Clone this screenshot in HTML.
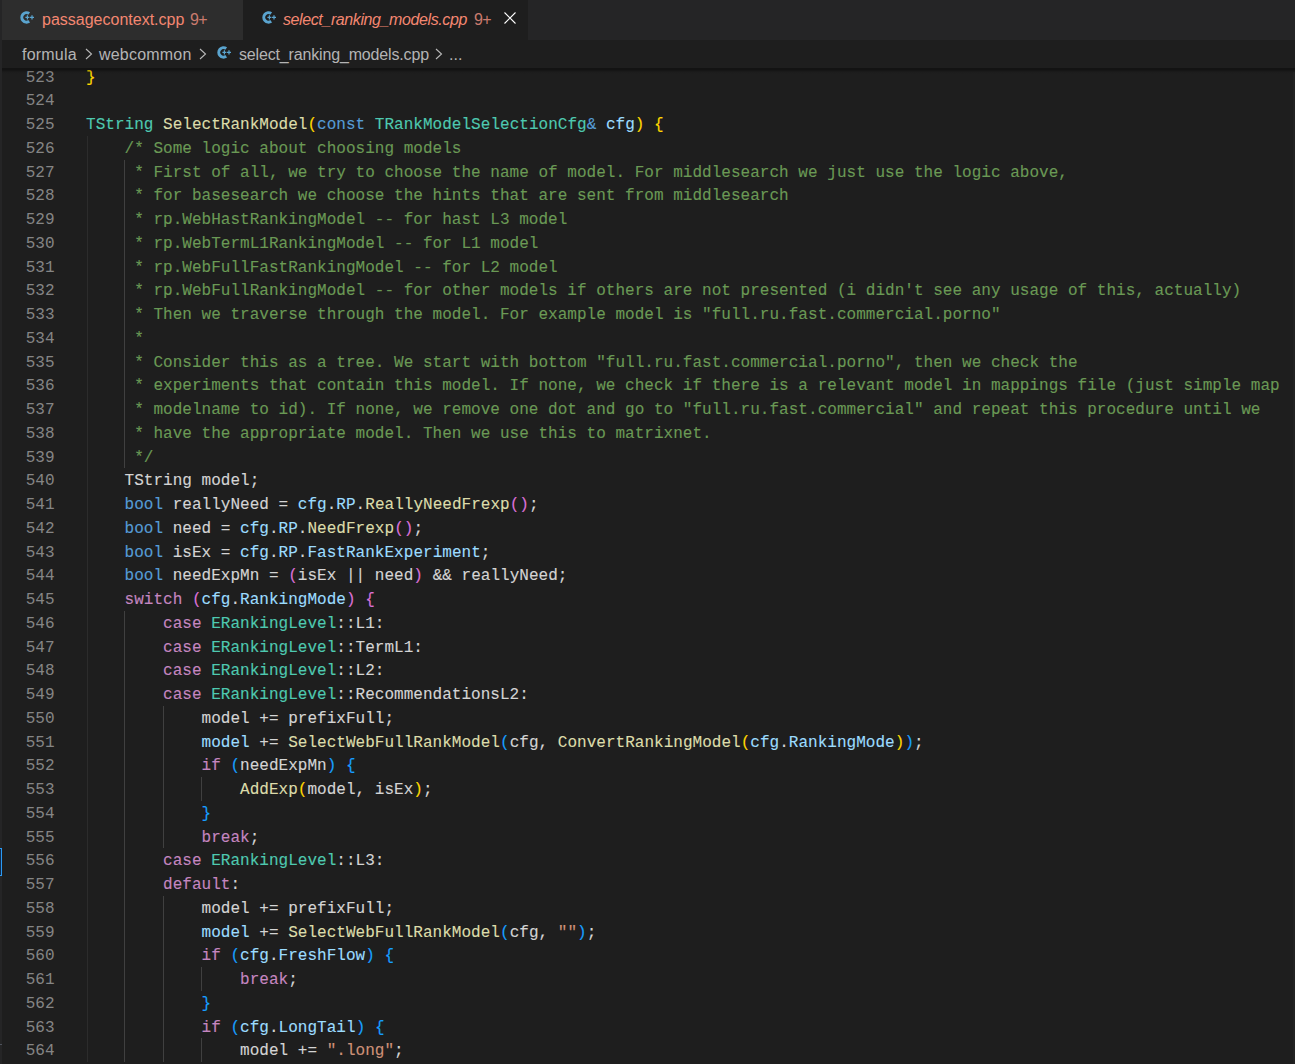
<!DOCTYPE html>
<html><head><meta charset="utf-8"><style>
html,body{margin:0;padding:0;}
body{width:1295px;height:1064px;background:#1e1e1e;position:relative;overflow:hidden;font-family:"Liberation Sans",sans-serif;}
#lstrip{position:absolute;left:0;top:0;width:2px;height:1064px;background:#252526;}
#tabbar{position:absolute;left:2px;top:0;width:1293px;height:40px;background:#252526;}
.tab{position:absolute;top:0;height:40px;}
#tab1{left:0;width:241px;background:#2d2d2d;}
#tab2{left:241px;width:285px;background:#1e1e1e;}
.tt{position:absolute;top:11px;font-size:16px;line-height:18px;color:#f48771;white-space:nowrap;}
.badge{position:absolute;top:11px;font-size:16px;letter-spacing:-0.6px;line-height:18px;color:#c97b6e;white-space:nowrap;}
.ic{position:absolute;}
#bc{position:absolute;left:2px;top:40px;width:1293px;height:28px;background:#1e1e1e;}
.bt{position:absolute;top:5.7px;font-size:16px;line-height:18px;color:#b4b4b4;white-space:nowrap;}
#shadow{position:absolute;left:2px;top:68px;width:1293px;height:6px;background:linear-gradient(rgba(0,0,0,0.37) 0px,rgba(0,0,0,0.37) 2px,rgba(0,0,0,0.16) 3px,rgba(0,0,0,0.05) 4.5px,rgba(0,0,0,0) 6px);z-index:5;}
#ed{position:absolute;left:2px;top:68px;width:1293px;height:996px;overflow:hidden;}
#edin{position:absolute;left:-2px;top:-68px;width:1295px;height:1064px;}
.ln{position:absolute;left:0;width:54.5px;text-align:right;font-family:"Liberation Mono",monospace;font-size:16px;line-height:23.75px;height:23.75px;color:#858585;white-space:pre;}
.cl{position:absolute;left:86px;font-family:"Liberation Mono",monospace;font-size:16px;line-height:23.75px;height:23.75px;color:#d4d4d4;white-space:pre;letter-spacing:0.025px;-webkit-text-stroke:0.12px;}
.g{position:absolute;width:1px;background:#404040;}
.g0{position:absolute;width:1px;background:#2c2c2c;}
.c{color:#6a9955} .k{color:#569cd6} .p{color:#c586c0} .t{color:#4ec9b0} .f{color:#dcdcaa} .v{color:#9cdcfe} .s{color:#ce9178}
.b1{color:#ffd700} .b2{color:#da70d6} .b3{color:#179fff}
#focus{position:absolute;left:-10px;top:848px;width:10px;height:26px;border:1px solid #2b9af3;background:#0f2a4d;}
</style></head><body>
<div id="lstrip"></div>
<div id="tabbar">
 <div class="tab" id="tab1">
  <svg class="ic" style="left:17px;top:10px" width="16" height="16" viewBox="0 0 16 16"><path d="M10.2 3.6 A4.7 4.7 0 1 0 10.2 11.3" fill="none" stroke="#5aa4cf" stroke-width="3"/><path d="M6.4 7.45h4M8.4 5.3v4.3M11 7.45h4M13 5.3v4.3" stroke="#5aa4cf" stroke-width="1.25"/></svg>
  <div class="tt" id="t1" style="left:40px">passagecontext.cpp</div>
  <div class="badge" id="b1" style="left:188px">9+</div>
 </div>
 <div class="tab" id="tab2">
  <svg class="ic" style="left:18px;top:10px" width="16" height="16" viewBox="0 0 16 16"><path d="M10.2 3.6 A4.7 4.7 0 1 0 10.2 11.3" fill="none" stroke="#5aa4cf" stroke-width="3"/><path d="M6.4 7.45h4M8.4 5.3v4.3M11 7.45h4M13 5.3v4.3" stroke="#5aa4cf" stroke-width="1.25"/></svg>
  <div class="tt" id="t2" style="left:40px;font-style:italic;letter-spacing:-0.4px">select_ranking_models.cpp</div>
  <div class="badge" id="b2" style="left:231px">9+</div>
  <svg class="ic" style="left:261px;top:12px" width="12" height="12" viewBox="0 0 12 12"><path d="M0.5 0.5L11.5 11.5M11.5 0.5L0.5 11.5" stroke="#ffffff" stroke-width="1.1"/></svg>
 </div>
</div>
<div id="bc">
 <div class="bt" id="bc1" style="left:20px;letter-spacing:0.2px">formula</div>
 <svg class="ic" style="left:83px;top:8px" width="8" height="12" viewBox="0 0 8 12"><path d="M1 1L6.5 6L1 11" fill="none" stroke="#bababa" stroke-width="1.1"/></svg>
 <div class="bt" id="bc2" style="left:97px;letter-spacing:0.2px">webcommon</div>
 <svg class="ic" style="left:197px;top:8px" width="8" height="12" viewBox="0 0 8 12"><path d="M1 1L6.5 6L1 11" fill="none" stroke="#bababa" stroke-width="1.1"/></svg>
 <svg class="ic" style="left:214px;top:5px" width="16" height="16" viewBox="0 0 16 16"><path d="M10.2 3.6 A4.7 4.7 0 1 0 10.2 11.3" fill="none" stroke="#5aa4cf" stroke-width="3"/><path d="M6.4 7.45h4M8.4 5.3v4.3M11 7.45h4M13 5.3v4.3" stroke="#5aa4cf" stroke-width="1.25"/></svg>
 <div class="bt" id="bc3" style="left:237px;letter-spacing:-0.16px">select_ranking_models.cpp</div>
 <svg class="ic" style="left:433px;top:8px" width="8" height="12" viewBox="0 0 8 12"><path d="M1 1L6.5 6L1 11" fill="none" stroke="#bababa" stroke-width="1.1"/></svg>
 <div class="bt" id="bc4" style="left:447px">...</div>
</div>
<div id="shadow"></div>
<div id="ed"><div id="edin">
<div class="g0" style="left:87px;top:135.75px;height:926.25px"></div><div class="g" style="left:124px;top:159.50px;height:308.75px"></div><div class="g" style="left:124px;top:610.75px;height:451.25px"></div><div class="g" style="left:163px;top:705.75px;height:142.50px"></div><div class="g" style="left:163px;top:895.75px;height:166.25px"></div><div class="g" style="left:201px;top:777.00px;height:23.75px"></div><div class="g" style="left:201px;top:967.00px;height:23.75px"></div><div class="g" style="left:201px;top:1038.25px;height:23.75px"></div>
<div class="ln" style="top:67px">523</div><div class="ln" style="top:90px">524</div><div class="ln" style="top:114px">525</div><div class="ln" style="top:138px">526</div><div class="ln" style="top:162px">527</div><div class="ln" style="top:185px">528</div><div class="ln" style="top:209px">529</div><div class="ln" style="top:233px">530</div><div class="ln" style="top:257px">531</div><div class="ln" style="top:280px">532</div><div class="ln" style="top:304px">533</div><div class="ln" style="top:328px">534</div><div class="ln" style="top:352px">535</div><div class="ln" style="top:375px">536</div><div class="ln" style="top:399px">537</div><div class="ln" style="top:423px">538</div><div class="ln" style="top:447px">539</div><div class="ln" style="top:470px">540</div><div class="ln" style="top:494px">541</div><div class="ln" style="top:518px">542</div><div class="ln" style="top:542px">543</div><div class="ln" style="top:565px">544</div><div class="ln" style="top:589px">545</div><div class="ln" style="top:613px">546</div><div class="ln" style="top:637px">547</div><div class="ln" style="top:660px">548</div><div class="ln" style="top:684px">549</div><div class="ln" style="top:708px">550</div><div class="ln" style="top:732px">551</div><div class="ln" style="top:755px">552</div><div class="ln" style="top:779px">553</div><div class="ln" style="top:803px">554</div><div class="ln" style="top:827px">555</div><div class="ln" style="top:850px">556</div><div class="ln" style="top:874px">557</div><div class="ln" style="top:898px">558</div><div class="ln" style="top:922px">559</div><div class="ln" style="top:945px">560</div><div class="ln" style="top:969px">561</div><div class="ln" style="top:993px">562</div><div class="ln" style="top:1017px">563</div><div class="ln" style="top:1040px">564</div>
<div class="cl" style="top:67px"><span class="b1">}</span></div><div class="cl" style="top:90px"></div><div class="cl" style="top:114px"><span class="t">TString</span> <span class="f">SelectRankModel</span><span class="b1">(</span><span class="k">const</span> <span class="t">TRankModelSelectionCfg</span><span class="k">&amp;</span> <span class="v">cfg</span><span class="b1">)</span> <span class="b1">{</span></div><div class="cl" style="top:138px">    <span class="c">/* Some logic about choosing models</span></div><div class="cl" style="top:162px">    <span class="c"> * First of all, we try to choose the name of model. For middlesearch we just use the logic above,</span></div><div class="cl" style="top:185px">    <span class="c"> * for basesearch we choose the hints that are sent from middlesearch</span></div><div class="cl" style="top:209px">    <span class="c"> * rp.WebHastRankingModel -- for hast L3 model</span></div><div class="cl" style="top:233px">    <span class="c"> * rp.WebTermL1RankingModel -- for L1 model</span></div><div class="cl" style="top:257px">    <span class="c"> * rp.WebFullFastRankingModel -- for L2 model</span></div><div class="cl" style="top:280px">    <span class="c"> * rp.WebFullRankingModel -- for other models if others are not presented (i didn&#x27;t see any usage of this, actually)</span></div><div class="cl" style="top:304px">    <span class="c"> * Then we traverse through the model. For example model is &quot;full.ru.fast.commercial.porno&quot;</span></div><div class="cl" style="top:328px">    <span class="c"> *</span></div><div class="cl" style="top:352px">    <span class="c"> * Consider this as a tree. We start with bottom &quot;full.ru.fast.commercial.porno&quot;, then we check the</span></div><div class="cl" style="top:375px">    <span class="c"> * experiments that contain this model. If none, we check if there is a relevant model in mappings file (just simple map</span></div><div class="cl" style="top:399px">    <span class="c"> * modelname to id). If none, we remove one dot and go to &quot;full.ru.fast.commercial&quot; and repeat this procedure until we</span></div><div class="cl" style="top:423px">    <span class="c"> * have the appropriate model. Then we use this to matrixnet.</span></div><div class="cl" style="top:447px">    <span class="c"> */</span></div><div class="cl" style="top:470px">    TString model;</div><div class="cl" style="top:494px">    <span class="k">bool</span> reallyNeed = <span class="v">cfg</span>.<span class="v">RP</span>.<span class="f">ReallyNeedFrexp</span><span class="b2">()</span>;</div><div class="cl" style="top:518px">    <span class="k">bool</span> need = <span class="v">cfg</span>.<span class="v">RP</span>.<span class="f">NeedFrexp</span><span class="b2">()</span>;</div><div class="cl" style="top:542px">    <span class="k">bool</span> isEx = <span class="v">cfg</span>.<span class="v">RP</span>.<span class="v">FastRankExperiment</span>;</div><div class="cl" style="top:565px">    <span class="k">bool</span> needExpMn = <span class="b2">(</span>isEx || need<span class="b2">)</span> &amp;&amp; reallyNeed;</div><div class="cl" style="top:589px">    <span class="p">switch</span> <span class="b2">(</span><span class="v">cfg</span>.<span class="v">RankingMode</span><span class="b2">)</span> <span class="b2">{</span></div><div class="cl" style="top:613px">        <span class="p">case</span> <span class="t">ERankingLevel</span>::L1:</div><div class="cl" style="top:637px">        <span class="p">case</span> <span class="t">ERankingLevel</span>::TermL1:</div><div class="cl" style="top:660px">        <span class="p">case</span> <span class="t">ERankingLevel</span>::L2:</div><div class="cl" style="top:684px">        <span class="p">case</span> <span class="t">ERankingLevel</span>::RecommendationsL2:</div><div class="cl" style="top:708px">            model += prefixFull;</div><div class="cl" style="top:732px">            <span class="v">model</span> += <span class="f">SelectWebFullRankModel</span><span class="b3">(</span>cfg, <span class="f">ConvertRankingModel</span><span class="b1">(</span><span class="v">cfg</span>.<span class="v">RankingMode</span><span class="b1">)</span><span class="b3">)</span>;</div><div class="cl" style="top:755px">            <span class="p">if</span> <span class="b3">(</span>needExpMn<span class="b3">)</span> <span class="b3">{</span></div><div class="cl" style="top:779px">                <span class="f">AddExp</span><span class="b1">(</span>model, isEx<span class="b1">)</span>;</div><div class="cl" style="top:803px">            <span class="b3">}</span></div><div class="cl" style="top:827px">            <span class="p">break</span>;</div><div class="cl" style="top:850px">        <span class="p">case</span> <span class="t">ERankingLevel</span>::L3:</div><div class="cl" style="top:874px">        <span class="p">default</span>:</div><div class="cl" style="top:898px">            model += prefixFull;</div><div class="cl" style="top:922px">            <span class="v">model</span> += <span class="f">SelectWebFullRankModel</span><span class="b3">(</span>cfg, <span class="s">&quot;&quot;</span><span class="b3">)</span>;</div><div class="cl" style="top:945px">            <span class="p">if</span> <span class="b3">(</span><span class="v">cfg</span>.<span class="v">FreshFlow</span><span class="b3">)</span> <span class="b3">{</span></div><div class="cl" style="top:969px">                <span class="p">break</span>;</div><div class="cl" style="top:993px">            <span class="b3">}</span></div><div class="cl" style="top:1017px">            <span class="p">if</span> <span class="b3">(</span><span class="v">cfg</span>.<span class="v">LongTail</span><span class="b3">)</span> <span class="b3">{</span></div><div class="cl" style="top:1040px">                model += <span class="s">&quot;.long&quot;</span>;</div>
</div></div>
<div id="focus"></div>
<div style="position:absolute;left:0;top:1044px;width:2px;height:1px;background:#4d525b"></div>
<div style="position:absolute;left:1293px;top:72px;width:2px;height:992px;background:#222222"></div>
</body></html>
